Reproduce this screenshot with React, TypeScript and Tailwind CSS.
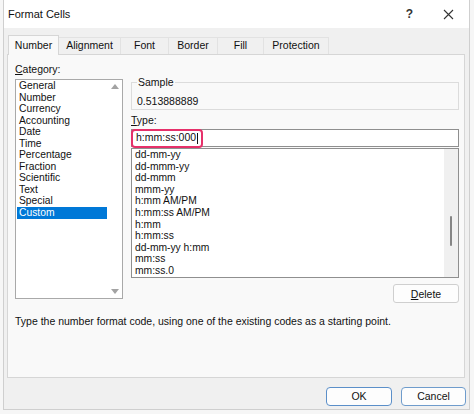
import React from 'react';

const categories = [
  'General', 'Number', 'Currency', 'Accounting', 'Date', 'Time',
  'Percentage', 'Fraction', 'Scientific', 'Text', 'Special', 'Custom',
];

const formats = [
  'dd-mm-yy', 'dd-mmm-yy', 'dd-mmm', 'mmm-yy', 'h:mm AM/PM', 'h:mm:ss AM/PM',
  'h:mm', 'h:mm:ss', 'dd-mm-yy h:mm', 'mm:ss', 'mm:ss.0',
];

const tabs = [
  { name: 'Number', w: 'w-[51px]' },
  { name: 'Alignment', w: 'w-[62px]' },
  { name: 'Font', w: 'w-[48px]' },
  { name: 'Border', w: 'w-[49px]' },
  { name: 'Fill', w: 'w-[46px]' },
  { name: 'Protection', w: 'w-[65px]' },
];

const App: React.FC = () => {
  return (
    <div className="w-[474px] h-[414px] bg-[#f6f6f6] pl-[3px] pr-[4px] pb-[4px] font-['Liberation_Sans',Arial,sans-serif] text-[#111] text-[10.5px]">
      <div className="h-full flex flex-col bg-[#f0f0f0] border-x border-b border-[#cfcfcf]">
        {/* Title bar */}
        <div className="h-[28px] bg-white flex items-center pl-[4px] pr-[12px] shrink-0">
          <span className="text-[11px] text-[#111]">Format Cells</span>
          <span className="ml-auto text-[12px] font-bold text-[#333] mr-[30px]">?</span>
          <svg width="11" height="11" viewBox="0 0 11 11" className="mr-[3px]">
            <path d="M1 1L10 10M10 1L1 10" stroke="#333" strokeWidth="1.1" />
          </svg>
        </div>

        {/* Tabs */}
        <div className="flex mt-[7px] ml-[4px] h-[19px] items-end relative z-10">
          {tabs.map((t, i) =>
            i === 0 ? (
              <div
                key={t.name}
                className={`${t.w} h-[20px] bg-[#f9f9f9] border border-b-0 border-[#d6d6d6] flex items-center justify-center -mb-[1px]`}
              >
                {t.name}
              </div>
            ) : (
              <div
                key={t.name}
                className={`${t.w} h-[17px] border-t border-r border-[#e2e2e2] flex items-center justify-center`}
              >
                {t.name}
              </div>
            )
          )}
        </div>

        {/* Panel */}
        <div className="ml-[3px] mr-[4px] h-[324px] bg-[#f9f9f9] border border-[#d6d6d6] pl-[7px] pr-[5px] pt-[7px] flex flex-col">
          <div className="flex gap-[8px]">
            {/* Category column */}
            <div className="w-[108px] flex flex-col">
              <div className="leading-[14px]">
                <u>C</u>ategory:
              </div>
              <div className="mt-[3px] h-[220px] bg-white border border-[#a9a9a9] flex">
                <div className="w-[91px] pl-[1px] text-[10.3px] leading-[11.55px]">
                  {categories.map((c) => (
                    <div
                      key={c}
                      className={c === 'Custom' ? 'bg-[#0078d7] text-white pl-[2px]' : 'pl-[2px]'}
                    >
                      {c}
                    </div>
                  ))}
                </div>
                <div className="flex-1 flex flex-col items-center justify-between py-[4px] pl-[1px]">
                  <svg width="8" height="5" viewBox="0 0 8 5">
                    <path d="M0 5L4 0L8 5Z" fill="#a3a3a3" />
                  </svg>
                  <svg width="8" height="5" viewBox="0 0 8 5">
                    <path d="M0 0L4 5L8 0Z" fill="#a3a3a3" />
                  </svg>
                </div>
              </div>
            </div>

            {/* Right column */}
            <div className="flex-1 flex flex-col">
              <fieldset className="mt-[13px] border border-[#dcdcdc] px-[5px] pb-[1px]">
                <legend className="px-[1px] leading-[14px]">Sample</legend>
                <div className="mt-[5px] leading-[14px]">0.513888889</div>
              </fieldset>
              <div className="mt-[3px] leading-[14px]">
                <u>T</u>ype:
              </div>
              <div className="mt-[2px] h-[18px] bg-white border border-[#8f8f8f] flex items-center">
                <span className="-ml-[1px] h-[19px] border-2 border-[#e6306a] rounded-[4px] flex items-center pl-[3px] pr-[3px]">
                  h:mm:ss:000
                  <span className="ml-[1px] w-[1px] h-[11px] bg-[#111]" />
                </span>
              </div>
              <div className="mt-[1px] h-[130px] bg-white border border-[#8f8f8f] flex">
                <div className="flex-1 pl-[3px] text-[10.3px] leading-[11.6px]">
                  {formats.map((f) => (
                    <div key={f}>{f}</div>
                  ))}
                </div>
                <div className="w-[14px] bg-[#f0f0f0] flex justify-center pt-[67px]">
                  <div className="w-[2px] h-[30px] bg-[#858585] rounded-full" />
                </div>
              </div>
              <button className="self-end mt-[6px] w-[66px] h-[19px] bg-[#fdfdfd] border border-[#cfcfcf] rounded-[3px] leading-[14px]">
                <u>D</u>elete
              </button>
            </div>
          </div>

          <div className="mt-[11px] leading-[14px]">
            Type the number format code, using one of the existing codes as a starting point.
          </div>
        </div>

        {/* Buttons */}
        <div className="flex justify-end gap-[9px] pr-[3px] mt-[9px]">
          <button className="w-[66px] h-[19px] bg-[#fdfdfd] border border-[#5b8fc9] rounded-[4px]">OK</button>
          <button className="w-[65px] h-[19px] bg-[#fdfdfd] border border-[#6f9ccc] rounded-[4px]">Cancel</button>
        </div>
      </div>
    </div>
  );
};

export default App;
